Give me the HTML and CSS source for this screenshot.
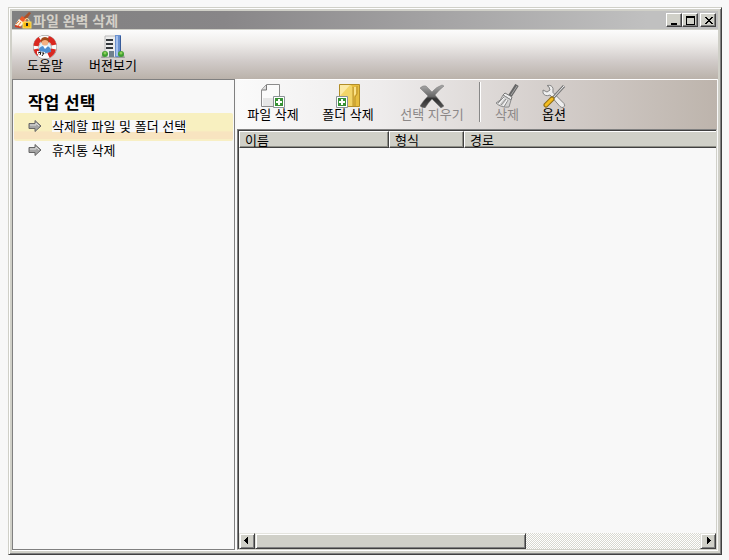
FILE: index.html
```
<!DOCTYPE html>
<html lang="ko">
<head>
<meta charset="utf-8">
<title>파일 완벽 삭제</title>
<link rel="stylesheet" href="styles.css">
</head>
<body>
<div class="window">
  <header class="titlebar">
    <svg class="app-icon" viewBox="0 0 18 18" aria-hidden="true">
      <path d="M15 1l2 1-5 7-3-2z" fill="#a8522c"/>
      <path d="M8 5l5 4-3 4-5-4z" fill="#ef5a28"/>
      <path d="M5 8l5 4-4 4-5-2z" fill="#fff0dc"/>
      <path d="M2 13l3-3M4 15l3-4" stroke="#e8823c"/>
      <path d="M1 14l7 2-2 1-5-1z" fill="#d93a1c"/>
      <path d="M11 11V9.500a2 2 0 014 0V11" fill="none" stroke="#f6e5a0"/>
      <rect x="9" y="11" width="8" height="6" fill="#f8b80c" stroke="#ffdf60"/>
      <path d="M13 12v3" stroke="#222" stroke-width="2"/>
    </svg>
    <h1 class="title">파일 완벽 삭제</h1>
    <div class="controls">
      <button class="control" type="button" aria-label="최소화"><svg viewBox="0 0 12 11" shape-rendering="crispEdges"><path d="M2 8h6v2H2z"/></svg></button>
      <button class="control" type="button" aria-label="최대화"><svg viewBox="0 0 12 11" shape-rendering="crispEdges"><path fill-rule="evenodd" d="M1 1h9v9H1zM2 3v6h7V3z"/></svg></button>
      <button class="control control-close" type="button" aria-label="닫기"><svg viewBox="0 0 12 11" shape-rendering="crispEdges"><path d="M2 2h2v1h1v1h2V3h1V2h2v1H9v1H8v1H7v1h1v1h1v1h1v1H8V8H7V7H5v1H4v1H2V8h1V7h1V6h1V5H4V4H3V3H2z"/></svg></button>
    </div>
  </header>

  <nav class="menu">
    <button class="tool tool-help" type="button">
      <svg viewBox="0 0 24 24" aria-hidden="true">
        <circle cx="12" cy="12" r="9" fill="#dff1fb" stroke="#858585" stroke-width="6"/>
        <circle cx="12" cy="12" r="9" fill="none" stroke="#fafafa" stroke-width="5"/>
        <path d="M7 4a9 9 0 00-4 7M15 3.500a9 9 0 016 6.500M20.500 14a9 9 0 01-5 6.500M3 14a9 9 0 003 5" fill="none" stroke="#d92820" stroke-width="5"/>
        <path d="M6 17q-1-5 4-6h4q4 1 4 6l-5 1z" fill="#4d8ed0"/>
        <path d="M10 11l2 3 3-3" fill="#fff"/>
        <circle cx="12" cy="7" r="3.500" fill="#f4b183"/>
        <path d="M8 8q-1-6 4-6 5 0 4 6-1-3-4-3-3 0-4 3z" fill="#a04a18"/>
        <path d="M4 16l8 1-2 5-6-3z" fill="#fff"/>
        <path d="M5 18l3-1-1 3M9 18h2l-2 3" fill="none" stroke="#111"/>
      </svg>
      <span>도움말</span>
    </button>
    <button class="tool tool-version" type="button">
      <svg viewBox="0 0 24 24" aria-hidden="true">
        <path d="M1 20h22l1 3H0z" fill="#9c9c9c"/>
        <path d="M4 1h11v21H4z" fill="#ececec" stroke="#b8b8b8"/>
        <path d="M14 0h6v22h-6z" fill="#6b91cf"/>
        <path d="M15 1h2v20h-2z" fill="#a5c0eb"/>
        <path d="M19.500 1v19" stroke="#375b99"/>
        <path d="M5 5h7M5 9h7M5 13h7" stroke="#34383c" stroke-width="2"/>
        <path d="M8 16h5v6H8z" fill="#70808c"/>
        <circle cx="4" cy="19" r="3" fill="#3f9e30"/><circle cx="20" cy="19" r="3" fill="#3f9e30"/>
        <circle cx="4" cy="18" r="1.500" fill="#8bd05a"/><circle cx="20" cy="18" r="1.500" fill="#8bd05a"/>
      </svg>
      <span>버젼보기</span>
    </button>
  </nav>

  <div class="content">
    <aside class="side">
      <h2 class="side-title">작업 선택</h2>
      <ul class="tasks">
        <li><a class="task task-active" href="#files">
          <svg viewBox="0 0 14 12" aria-hidden="true"><path d="M1 3.500h6v-3l6 5.500-6 5.500v-3H1z" fill="#a4a4a4" stroke="#666"/><path d="M2 5h6V3l3 3" fill="none" stroke="#ddd"/></svg>
          <span>삭제할 파일 및 폴더 선택</span></a></li>
        <li><a class="task" href="#trash">
          <svg viewBox="0 0 14 12" aria-hidden="true"><path d="M1 3.500h6v-3l6 5.500-6 5.500v-3H1z" fill="#a4a4a4" stroke="#666"/><path d="M2 5h6V3l3 3" fill="none" stroke="#ddd"/></svg>
          <span>휴지통 삭제</span></a></li>
      </ul>
    </aside>

    <main class="main">
      <div class="actions">
        <button class="tool tool-file" type="button">
          <svg viewBox="0 0 24 24" aria-hidden="true">
            <path d="M5.500.5h13v22h-18V6z" fill="#fafafa" stroke="#8b8b8b"/>
            <path d="M5.500 1v5H1" fill="#ddd" stroke="#777"/>
            <path d="M2 14h16v8H2z" fill="#e6e6e6"/>
            <path d="M12.500 12.500h11v11h-11z" fill="#fff" stroke="#8a9297"/>
            <path d="M14 14h8v8h-8z" fill="#379136"/>
            <path d="M18 15v6M15 18h6" stroke="#fff" stroke-width="2"/>
          </svg>
          <span>파일 삭제</span>
        </button>
        <button class="tool tool-folder" type="button">
          <svg viewBox="0 0 24 24" aria-hidden="true">
            <path d="M3.500.5h20v22h-20z" fill="#e6bd3f" stroke="#b28d27"/>
            <path d="M4 1h11l2 3v18H4z" fill="#f3d568"/>
            <path d="M4 1h10L4 12z" fill="#fbe9a4"/>
            <path d="M17 3v19M21 2v8l-2 3v9" fill="none" stroke="#b8902c"/>
            <path d="M18 3h2v7l-2 2z" fill="#fbe28a"/>
            <path d="M.5 12.500h11v11H.5z" fill="#fff" stroke="#8a9297"/>
            <path d="M2 14h8v8H2z" fill="#379136"/>
            <path d="M6 15v6M3 18h6" stroke="#fff" stroke-width="2"/>
          </svg>
          <span>폴더 삭제</span>
        </button>
        <button class="tool tool-clear" type="button" disabled>
          <svg viewBox="0 0 24 24" aria-hidden="true">
            <defs><linearGradient id="cross" x2="0" y2="1"><stop stop-color="#aaa"/><stop offset=".5" stop-color="#666"/><stop offset=".6" stop-color="#303030"/><stop offset="1" stop-color="#555"/></linearGradient></defs>
            <path d="M0 4q3-3 6-2l6 6q4-5 10-7l2 1q-5 4-9 9l9 11-3 2-9-9q-4 4-7 9-3 0-5-2 3-5 8-10z" fill="url(#cross)" stroke="#777" stroke-width=".5"/>
          </svg>
          <span>선택 지우기</span>
        </button>
        <div class="divider"></div>
        <button class="tool tool-delete" type="button" disabled>
          <svg viewBox="0 0 24 24" aria-hidden="true">
            <path d="M22 1l-7 11" stroke="#666" stroke-width="4"/>
            <path d="M22 2l-6 9" stroke="#aaa"/>
            <path d="M10 9l7 4-1 3-8-5z" fill="#eee" stroke="#777"/>
            <path d="M8 11l8 5-2 7q-8 1-13-4 5-2 7-8z" fill="#d1d1d1" stroke="#8c8c8c"/>
            <path d="M9 13l-6 6M11 15l-5 6M13 16l-4 7" stroke="#8c8c8c"/>
            <path d="M9 14l-5 6M12 16l-4 6" stroke="#fff"/>
          </svg>
          <span>삭제</span>
        </button>
        <button class="tool tool-options" type="button">
          <svg viewBox="0 0 24 24" aria-hidden="true">
            <path d="M5 1.500q5-1 6 3v4l11 11q2 3-1 4-2 0-3-1L8 11q-5 2-7-2V6l4 2 3-2-1-3z" fill="#eee" stroke="#858585"/>
            <path d="M22 2L10 15" stroke="#777" stroke-width="3"/>
            <path d="M22 2L10 15" stroke="#f2f2f2"/>
            <path d="M10 15l-6 6" stroke="#8d6b13" stroke-width="5" stroke-linecap="round"/>
            <path d="M10 15l-6 6" stroke="#f4bd20" stroke-width="3" stroke-linecap="round"/>
          </svg>
          <span>옵션</span>
        </button>
      </div>

      <div class="list">
        <table class="files">
          <colgroup><col class="col-name"><col class="col-type"><col></colgroup>
          <thead><tr><th scope="col">이름</th><th scope="col">형식</th><th scope="col">경로</th></tr></thead>
          <tbody></tbody>
        </table>
        <div class="scrollbar">
          <button class="arrow" type="button" aria-label="왼쪽으로"><svg viewBox="0 0 8 8" shape-rendering="crispEdges"><path d="M5 0v7H4V6H3V5H2V4H1V3h1V2h1V1h1V0z"/></svg></button>
          <div class="track"><div class="thumb"></div></div>
          <button class="arrow" type="button" aria-label="오른쪽으로"><svg viewBox="0 0 8 8" shape-rendering="crispEdges"><path d="M3 0v7h1V6h1V5h1V4h1V3H6V2H5V1H4V0z"/></svg></button>
        </div>
      </div>
    </main>
  </div>
</div>
</body>
</html>
```

FILE: styles.css
```
* { box-sizing: border-box; }

body {
  margin: 0;
  padding: 7px 7px 5px 8px;
  height: 100vh;
  background: #f8f8f8;
  color: #000;
  font: 13px/14px "Noto Sans CJK KR", sans-serif;
}

button {
  margin: 0;
  padding: 0;
  border: 0;
  background: none;
  color: inherit;
  font: inherit;
}

svg { display: block; }

.window {
  display: flex;
  flex-direction: column;
  height: 100%;
  padding: 3px;
  background: #d0d0c8;
  border: 1px solid;
  border-color: #d0d0c8 #404040 #404040 #d0d0c8;
  box-shadow: inset 1px 1px #fff, inset -1px -1px #808080;
}

.titlebar {
  display: flex;
  align-items: center;
  flex: none;
  height: 18px;
  padding: 0 2px;
  background: linear-gradient(90deg, #808080, #888688 30%, #c0c0c0 90%);
}

.app-icon { width: 18px; height: 18px; }

.title {
  flex: 1;
  margin: 0 0 0 1px;
  color: #d4d0c8;
  font-size: 14px;
  line-height: 16px;
  font-weight: 700;
}

.controls { display: flex; }

.control {
  width: 16px;
  height: 14px;
  padding: 1px 2px;
  background: #d0d0c8;
  border: 1px solid;
  border-color: #fff #404040 #404040 #fff;
  box-shadow: inset -1px -1px #808080;
}

.control svg { width: 12px; height: 11px; }
.control-close { margin-left: 2px; }

.menu {
  display: flex;
  flex: none;
  gap: 22px;
  height: 50px;
  padding: 5px 12px 0;
  border-top: 1px solid #d0d0c8;
  background: linear-gradient(#fcfcfc, #f0eeec 25%, #d0cac8 65%, #bab2aa);
}

.tool {
  display: flex;
  flex-direction: column;
  align-items: center;
  flex: none;
  white-space: nowrap;
}

.tool svg { width: 24px; height: 24px; }
.tool span { line-height: 12px; }
.tool:disabled { color: #8c8888; }
.tool-help { width: 42px; }
.tool-version { width: 50px; }

.content {
  display: flex;
  flex: 1;
  min-height: 0;
  gap: 2px;
  padding-right: 1px;
  border-bottom: 1px solid #fff;
  background: #f8f8f8;
}

.side {
  flex: 0 0 223px;
  border: 1px solid #808080;
  background: #f8f8f8;
}

.side-title {
  margin: 11px 0 0 15px;
  font-size: 17px;
  line-height: 22px;
  font-weight: 700;
}

.tasks {
  margin: 0 1px;
  padding: 0;
  list-style: none;
}

.task {
  display: flex;
  align-items: center;
  gap: 10px;
  height: 18px;
  padding-left: 14px;
  color: #000;
  line-height: 12px;
  text-decoration: none;
}

.task svg { width: 14px; height: 12px; }

.task-active {
  height: 28px;
  padding-bottom: 3px;
  border-radius: 2px;
  background: linear-gradient(#f8f0c0 0 62%, #f8e4c0 68% 92%, #f8efc4 94%);
}

.task-active span { background: #f8f8f8; }

.main {
  display: flex;
  flex-direction: column;
  flex: 1;
  min-width: 0;
}

.actions {
  display: flex;
  align-items: flex-start;
  flex: none;
  height: 50px;
  padding: 4px 0 0 10px;
  border-top: 1px solid #fff;
  background: linear-gradient(90deg, #fafafa, #eeecec 30%, #d4cecb 65%, #bdb4ac);
}

.tool-file, .tool-folder { width: 52px; }
.tool-folder { margin-left: 23px; }
.tool-clear { width: 64px; margin-left: 26px; }
.tool-delete { width: 26px; margin-left: 13px; }
.tool-options { width: 26px; margin-left: 21px; }

.divider {
  width: 2px;
  height: 40px;
  margin: -2px 0 0 15px;
  border-left: 1px solid #888;
  border-right: 1px solid #fff;
}

.list {
  display: flex;
  flex-direction: column;
  flex: 1;
  min-height: 0;
  padding: 1px 0 0 1px;
  border: 1px solid;
  border-color: #808080 #d0d0c8 #d0d0c8 #808080;
  box-shadow: inset 1px 1px #404040;
  background: #f8f8f8;
}

.files {
  width: 100%;
  table-layout: fixed;
  border-collapse: separate;
  border-spacing: 0;
}

.col-name { width: 150px; }
.col-type { width: 75px; }

.files th {
  height: 17px;
  padding: 0 5px;
  background: #d0d0c8;
  border: 1px solid;
  border-color: #fff #404040 #404040 #fff;
  box-shadow: inset -1px -1px #909088;
  text-align: left;
  font-weight: 400;
}

.files th:last-child { border-right: 0; box-shadow: inset 0 -1px #909088; }

.scrollbar {
  display: flex;
  height: 16px;
  margin-top: auto;
}

.arrow, .thumb {
  background: #d0d0c8;
  border: 1px solid;
  border-color: #e4e4de #404040 #404040 #e4e4de;
  box-shadow: inset 1px 1px #fff, inset -1px -1px #808080;
}

.arrow {
  flex: none;
  width: 16px;
  padding: 0 3px;
}

.arrow svg { width: 8px; height: 8px; }

.track {
  flex: 1;
  background: repeating-conic-gradient(#d8d8d0 0 25%, #fff 0 50%) 0 0 / 2px 2px;
}

.thumb { width: 61%; height: 16px; }
```
